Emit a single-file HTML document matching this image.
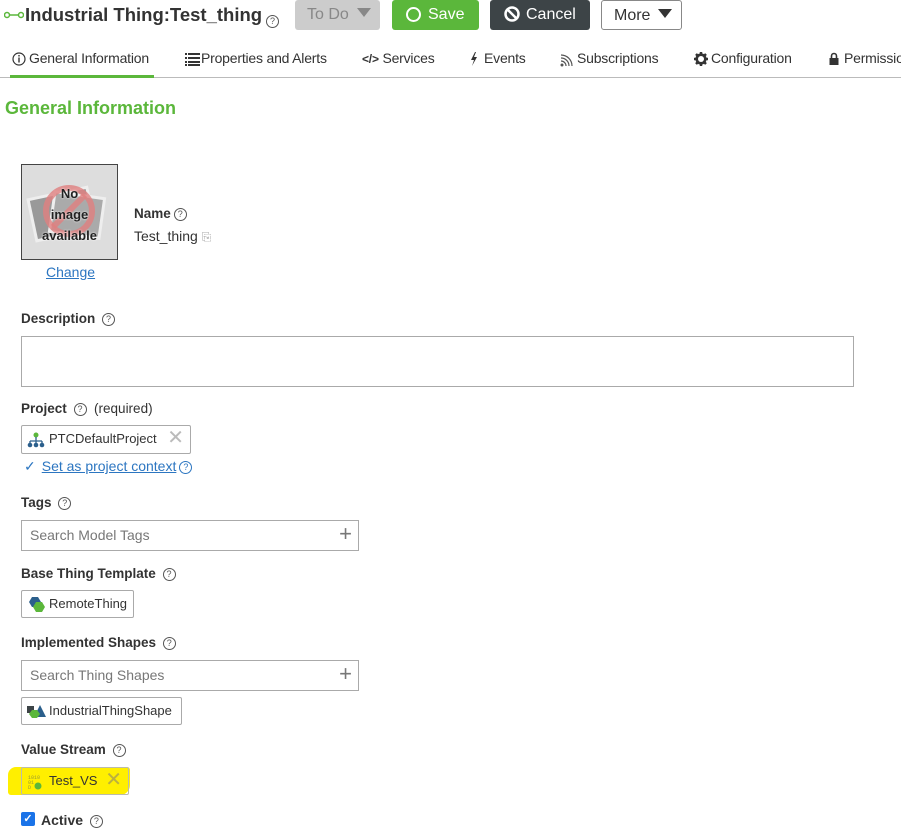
<!DOCTYPE html>
<html><head><meta charset="utf-8"><style>
body{margin:0;width:901px;height:837px;overflow:hidden;background:#fff;font-family:"Liberation Sans",Arial,sans-serif;color:#333;position:relative}
.a{position:absolute;white-space:nowrap}
.lbl{font-weight:bold;font-size:13.5px;color:#333}
.q{display:inline-block;width:11px;height:11px;border:1px solid #555;border-radius:50%;font-size:9px;line-height:11px;text-align:center;font-weight:normal;color:#555;vertical-align:middle;margin-left:3px}
.btn{position:absolute;top:0;height:30px;border-radius:3px;font-size:16px;line-height:30px;box-sizing:border-box}
.tab{position:absolute;top:50px;font-size:14px;color:#333;letter-spacing:-0.2px}
.tab svg{position:absolute;top:2px}
.box{position:absolute;border:1px solid #aaa;box-sizing:border-box;background:#fff}
.chip{position:absolute;border:1px solid #aaa;border-radius:2px;box-sizing:border-box;font-size:13px;color:#333;line-height:26px}
.ph{font-size:14px;color:#777;line-height:28px;padding-left:8px}
.tri{display:inline-block;width:0;height:0;border-left:7px solid transparent;border-right:7px solid transparent;border-top:9px solid currentColor;vertical-align:2px;margin-left:8px}
</style></head><body>
<svg class="a" style="left:4px;top:11px" width="20" height="8"><circle cx="3" cy="4" r="2.5" fill="none" stroke="#5bb73b" stroke-width="1.5"/><circle cx="17" cy="4" r="2.5" fill="none" stroke="#5bb73b" stroke-width="1.5"/><line x1="5.5" y1="4" x2="14.5" y2="4" stroke="#5bb73b" stroke-width="1.5"/></svg>
<div class="a" style="left:25px;top:4px;font-size:18.5px;font-weight:bold;color:#333">Industrial Thing:Test_thing<span class="q" style="font-size:9px;margin-left:4px;vertical-align:-3px">?</span></div>
<div class="btn" style="left:295px;width:85px;background:#ccc;color:#888;padding-left:12px">To Do<span class="tri"></span></div>
<div class="btn" style="left:392px;width:87px;background:#5bb73b;color:#fff;padding-left:14px"><span style="display:inline-block;width:11px;height:11px;border:2.5px solid #fff;border-radius:50%;vertical-align:-3px;margin-right:7px"></span>Save</div>
<div class="btn" style="left:490px;width:100px;background:#3d4447;color:#fff;padding-left:14px"><svg width="16" height="16" style="vertical-align:-3px;margin-right:6px"><circle cx="8" cy="8" r="6.5" fill="none" stroke="#fff" stroke-width="2.5"/><line x1="3.5" y1="3.5" x2="12.5" y2="12.5" stroke="#fff" stroke-width="2.5"/></svg>Cancel</div>
<div class="btn" style="left:601px;width:81px;border:1px solid #888;color:#333;padding-left:12px">More<span class="tri"></span></div>

<div class="tab" style="left:12px"><svg style="left:0" width="14" height="14"><circle cx="7" cy="7" r="6" fill="none" stroke="#333" stroke-width="1.2"/><rect x="6.3" y="5.5" width="1.4" height="5" fill="#333"/><rect x="6.3" y="3" width="1.4" height="1.5" fill="#333"/></svg><span style="margin-left:17px">General Information</span></div>
<div class="tab" style="left:185px"><svg style="left:0" width="15" height="14"><g fill="#333"><rect x="0" y="1" width="2" height="2"/><rect x="0" y="5" width="2" height="2"/><rect x="0" y="9" width="2" height="2"/><rect x="0" y="12" width="2" height="2"/><rect x="3" y="1" width="12" height="2"/><rect x="3" y="5" width="12" height="2"/><rect x="3" y="9" width="12" height="2"/><rect x="3" y="12" width="12" height="2"/></g></svg><span style="margin-left:16px">Properties and Alerts</span></div>
<div class="tab" style="left:362px"><span style="font-size:12px;font-weight:bold">&lt;/&gt;</span> Services</div>
<div class="tab" style="left:470px"><svg style="left:0" width="8" height="14"><path d="M5 0L1 8h3l-2 6 5-9H4l2-5z" fill="#333"/></svg><span style="margin-left:14px">Events</span></div>
<div class="tab" style="left:560px"><svg style="left:0" width="15" height="15"><g fill="none" stroke="#555" stroke-width="1.2"><path d="M1 3a11 11 0 0 1 11 11"/><path d="M1 6a8 8 0 0 1 8 8"/><path d="M1 9a5 5 0 0 1 5 5"/></g><circle cx="2" cy="13" r="1.5" fill="#555"/></svg><span style="margin-left:17px">Subscriptions</span></div>
<div class="tab" style="left:694px"><svg style="left:0" width="14" height="14"><circle cx="7" cy="7" r="4.5" fill="none" stroke="#333" stroke-width="2.2"/><g stroke="#333" stroke-width="2.5"><line x1="7" y1="0" x2="7" y2="14"/><line x1="0" y1="7" x2="14" y2="7"/><line x1="2" y1="2" x2="12" y2="12"/><line x1="12" y1="2" x2="2" y2="12"/></g><circle cx="7" cy="7" r="3" fill="#fff"/></svg><span style="margin-left:17px">Configuration</span></div>
<div class="tab" style="left:829px"><svg style="left:0" width="10" height="14"><path d="M2.5 6V4a2.5 2.5 0 0 1 5 0v2" fill="none" stroke="#333" stroke-width="1.6"/><rect x="0.5" y="6" width="9" height="7" fill="#333"/></svg><span style="margin-left:15px">Permissio</span></div>
<div class="a" style="left:0;top:77px;width:901px;height:1px;background:#bbb"></div>
<div class="a" style="left:10px;top:75px;width:144px;height:3px;background:#5bb73b"></div>

<div class="a" style="left:5px;top:98px;font-size:18px;font-weight:bold;color:#5bb73b">General Information</div>

<div class="a" style="left:21px;top:164px;width:97px;height:96px;box-sizing:border-box;border:1px solid #444;background:#ddd;overflow:hidden">
<svg width="95" height="94" style="position:absolute;left:0;top:0"><rect x="10" y="28" width="60" height="42" fill="#999" stroke="#eee" stroke-width="3" transform="rotate(-12 40 50)"/><rect x="30" y="30" width="50" height="40" fill="#aaa" stroke="#eee" stroke-width="3" transform="rotate(8 55 50)"/><circle cx="47" cy="46" r="23" fill="none" stroke="#e08080" stroke-width="6" opacity=".8"/><line x1="31" y1="62" x2="63" y2="30" stroke="#e08080" stroke-width="6" opacity=".8"/></svg>
<div style="position:absolute;left:0;width:95px;top:18px;text-align:center;font-size:13px;font-weight:bold;line-height:21px;color:#222;text-shadow:0 0 2px #fff">No<br>image<br>available</div></div>
<div class="a" style="left:46px;top:264px;font-size:14px;color:#2c76c1;text-decoration:underline">Change</div>
<div class="a lbl" style="left:134px;top:206px">Name<span class="q">?</span></div>
<div class="a" style="left:134px;top:228px;font-size:14px">Test_thing <span style="color:#aaa;font-size:12px">⎘</span></div>

<div class="a lbl" style="left:21px;top:311px">Description <span class="q">?</span></div>
<div class="box" style="left:21px;top:336px;width:833px;height:51px"></div>

<div class="a lbl" style="left:21px;top:401px">Project <span class="q">?</span> <span style="font-weight:normal">&nbsp;(required)</span></div>
<div class="chip" style="left:21px;top:425px;width:170px;height:29px;padding-left:27px">PTCDefaultProject <span style="color:#bbb;font-size:20px;position:absolute;right:6px;top:-1px">✕</span>
<svg style="position:absolute;left:5px;top:6px" width="18" height="16"><circle cx="9" cy="3" r="2.5" fill="#5bb73b"/><path d="M9 5v4M3 9h12M3 9v3M9 9v3M15 9v3" stroke="#2b5f8c" stroke-width="1.3" fill="none"/><circle cx="3" cy="13" r="2.3" fill="#2b5f8c"/><circle cx="9" cy="13" r="2.3" fill="#2b5f8c"/><circle cx="15" cy="13" r="2.3" fill="#2b5f8c"/></svg></div>
<div class="a" style="left:24px;top:458px;font-size:14px;color:#2c76c1"><span style="margin-right:6px">✓</span><span style="text-decoration:underline">Set as project context</span><span class="q" style="border-color:#2c76c1;color:#2c76c1">?</span></div>

<div class="a lbl" style="left:21px;top:495px">Tags <span class="q">?</span></div>
<div class="box ph" style="left:21px;top:520px;width:338px;height:31px">Search Model Tags<span style="position:absolute;right:6px;top:-1px;font-size:22px;color:#777">+</span></div>

<div class="a lbl" style="left:21px;top:566px">Base Thing Template <span class="q">?</span></div>
<div class="chip" style="left:21px;top:590px;width:113px;height:28px;padding-left:27px">RemoteThing
<svg style="position:absolute;left:5px;top:5px" width="18" height="17"><path d="M5 1h6l3 5-3 5H5L2 6z" fill="#2b5f8c"/><path d="M9 6h6l3 5-3 5H9l-3-5z" fill="#5bb73b"/></svg></div>

<div class="a lbl" style="left:21px;top:635px">Implemented Shapes <span class="q">?</span></div>
<div class="box ph" style="left:21px;top:660px;width:338px;height:31px">Search Thing Shapes<span style="position:absolute;right:6px;top:-1px;font-size:22px;color:#777">+</span></div>
<div class="chip" style="left:21px;top:697px;width:161px;height:28px;padding-left:27px">IndustrialThingShape
<svg style="position:absolute;left:5px;top:6px" width="20" height="16"><rect x="0" y="2" width="7" height="7" fill="#3d4447"/><path d="M13 1l6 12h-12z" fill="#2b5f8c"/><path d="M5 6h5l3 4-3 4H5l-3-4z" fill="#5bb73b"/></svg></div>

<div class="a lbl" style="left:21px;top:742px">Value Stream <span class="q">?</span></div>
<div class="a" style="left:8px;top:767px;width:122px;height:28px;background:#ffef00;border-radius:8px 3px 10px 3px"></div>
<div class="chip" style="left:21px;top:767px;width:108px;height:28px;padding-left:27px;background:transparent;border-color:#bba">Test_VS <span style="color:#bbb040;font-size:20px;position:absolute;right:6px;top:-1px">✕</span>
<svg style="position:absolute;left:5px;top:5px" width="18" height="18"><text x="1" y="6" font-size="5" fill="#9a9a30" font-family="Liberation Mono">1010</text><text x="1" y="11" font-size="5" fill="#9a9a30" font-family="Liberation Mono">01</text><text x="1" y="16" font-size="5" fill="#9a9a30" font-family="Liberation Mono">D</text><circle cx="11" cy="13" r="3.5" fill="#5bb73b"/></svg></div>

<div class="a" style="left:21px;top:812px;width:14px;height:14px;background:#1a73e8;border-radius:2px;color:#fff;font-size:11px;line-height:14px;text-align:center;font-weight:bold">✓</div>
<div class="a lbl" style="left:41px;top:812px;font-size:14px">Active <span class="q">?</span></div>
</body></html>
